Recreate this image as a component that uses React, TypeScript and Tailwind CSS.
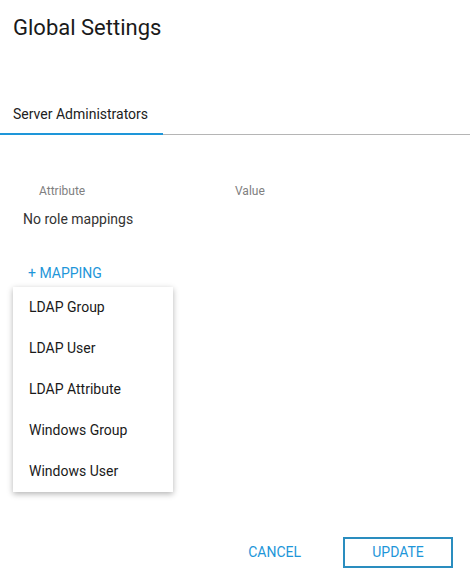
import { useState } from "react";

const MAPPING_TYPES = ["LDAP Group", "LDAP User", "LDAP Attribute", "Windows Group", "Windows User"];

export default function App() {
  const [menuOpen, setMenuOpen] = useState(true);

  return (
    <div className="relative w-[470px] h-[579px] bg-white font-['Roboto',sans-serif] text-[#212121] overflow-hidden">
      {/* Title */}
      <h1 className="px-[13px] pt-[14px] text-[22px] leading-[28px] font-normal text-[#1a1a1a]">Global Settings</h1>

      {/* Tabs */}
      <div className="mt-[64px] flex border-b border-[#b5b5b5]">
        <button className="w-[163px] text-left pl-[13px] pb-[11px] text-[14px] leading-[16px] text-[#212121] border-b-2 border-[#1e96d9] -mb-px">
          Server Administrators
        </button>
      </div>

      {/* Mapping table */}
      <div className="mt-[49px] flex text-[12px] leading-[14px] text-[#808080]">
        <span className="pl-[39px] w-[235px]">Attribute</span>
        <span>Value</span>
      </div>
      <p className="mt-[13px] pl-[23px] text-[14px] leading-[16px] text-[#333]">No role mappings</p>

      <div className="relative mt-[34px] pl-[28px]">
        <button
          onClick={() => setMenuOpen(!menuOpen)}
          className="text-[14px] leading-[16px] text-[#1e96d9] cursor-pointer"
        >
          + MAPPING
        </button>
        {menuOpen && (
          <ul className="absolute left-[13px] top-[26px] w-[160px] bg-white shadow-[0_2px_6px_rgba(0,0,0,0.3)]">
            {MAPPING_TYPES.map((t) => (
              <li key={t} className="h-[41px] flex items-center pl-[16px] text-[14px] text-[#1a1a1a]">
                {t}
              </li>
            ))}
          </ul>
        )}
      </div>

      {/* Actions */}
      <div className="absolute right-[17px] bottom-[11px] flex items-center gap-[42px]">
        <button className="text-[14px] text-[#1e96d9]">CANCEL</button>
        <button className="w-[110px] h-[31px] border-2 border-[#2a8dbf] text-[14px] text-[#1e96d9]">UPDATE</button>
      </div>
    </div>
  );
}
